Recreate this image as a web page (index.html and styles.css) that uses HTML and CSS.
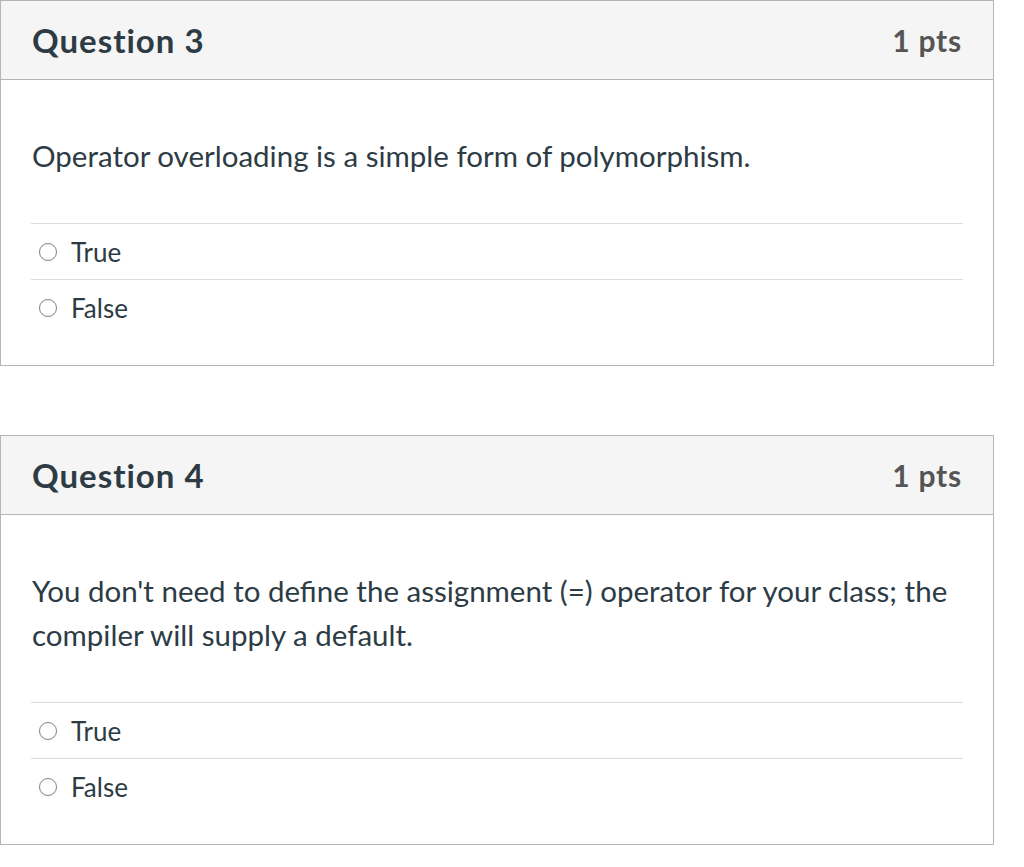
FILE: index.html
```html
<!DOCTYPE html>
<html>
<head>
<meta charset="utf-8">
<link rel="stylesheet" href="styles.css">
</head>
<body>
<div class="page">
  <section class="question">
    <header class="q-header">
      <h2 class="q-title">Question 3</h2>
      <span class="q-pts">1 pts</span>
    </header>
    <div class="q-body">
      <p class="q-text">Operator overloading is a simple form of polymorphism.</p>
      <div class="answers">
        <label class="answer"><span class="radio"></span><span class="answer-label">True</span></label>
        <label class="answer"><span class="radio"></span><span class="answer-label">False</span></label>
      </div>
    </div>
  </section>
  <section class="question">
    <header class="q-header">
      <h2 class="q-title">Question 4</h2>
      <span class="q-pts">1 pts</span>
    </header>
    <div class="q-body">
      <p class="q-text">You don't need to define the assignment (=) operator for your class; the compiler will supply a default.</p>
      <div class="answers">
        <label class="answer"><span class="radio"></span><span class="answer-label">True</span></label>
        <label class="answer"><span class="radio"></span><span class="answer-label">False</span></label>
      </div>
    </div>
  </section>
</div>
</body>
</html>
```
FILE: styles.css
```css
html, body {
  margin: 0;
  padding: 0;
  background: #ffffff;
}
body {
  font-family: Lato, "Open Sans", sans-serif;
  color: #2d3b45;
}
.page {
  width: 994px;
  display: flex;
  flex-direction: column;
  gap: 69px;
}
.question {
  border: 1px solid #b5b5b5;
  background: #fff;
}
.q-header {
  height: 78px;
  background: #f5f5f5;
  border-bottom: 1px solid #b5b5b5;
  display: flex;
  align-items: center;
  justify-content: space-between;
  padding: 0 31px 0 31px;
}
.q-title {
  margin: 0;
  font-size: 33px;
  font-weight: 700;
  letter-spacing: 1px;
  color: #2d3b45;
}
.q-pts {
  font-size: 30px;
  font-weight: 700;
  letter-spacing: 0.8px;
  color: #555555;
}
.q-body {
  padding: 0 30px;
}
.q-text {
  margin: 0;
  padding: 54px 0 45px 1px;
  font-size: 29.5px;
  line-height: 44px;
}
.answers {
  display: flex;
  flex-direction: column;
  padding-bottom: 30px;
}
.answer {
  display: flex;
  align-items: center;
  height: 55px;
  border-top: 1px solid #dcdcdc;
}
.radio {
  width: 16px;
  height: 16px;
  border: 1.5px solid #7f7f7f;
  border-radius: 50%;
  margin: 0 14px 0 8px;
  flex: none;
}
.answer-label {
  font-size: 26px;
}
```
